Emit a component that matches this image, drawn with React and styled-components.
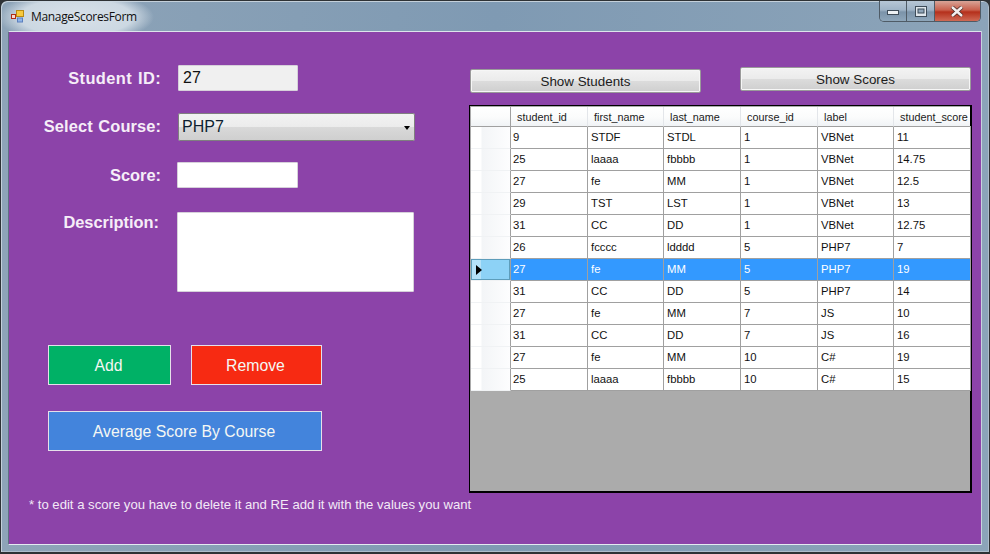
import React from "react";
import styled, { createGlobalStyle } from "styled-components";

const Global = createGlobalStyle`
  html, body { margin: 0; padding: 0; background: #2f3336; }
  body { width: 990px; height: 554px; overflow: hidden; font-family: "Liberation Sans", Arial, sans-serif; }
`;

const Frame = styled.div`
  box-sizing: border-box; width: 990px; height: 554px; padding: 0 7px 7px;
  display: flex; flex-direction: column;
  border: 1px solid #2e3235; border-bottom-width: 2px; border-radius: 7px 7px 2px 2px;
  background: linear-gradient(90deg, #8ea4b8 0%, #7f9ab3 50%, #8ca4b9 100%);
  box-shadow: inset 1px 1px 0 #c4d0da, inset -1px -1px 0 #aebdcb;
`;
const TitleBar = styled.div`
  height: 30px; flex: none; display: flex; justify-content: space-between; align-items: flex-start;
  margin: 0 0 0 -7px; padding-left: 10px;
  background: radial-gradient(ellipse 78px 26px at 75px 16px, #d8e1e9 0%, #ccd8e2 72%, rgba(138,163,186,0) 100%);
`;
const TitleLeft = styled.div`
  display: flex; align-items: center; gap: 6px; height: 30px;
`;
const TitleText = styled.span`
  font: 12px "Open Sans", "Noto Sans", sans-serif; color: #101010; letter-spacing: -0.33px;
`;
const Caption = styled.div`
  display: flex; height: 21px; margin-right: 1px; width: 102px;
  border: 1px solid #4f5b66; border-top: none; border-radius: 0 0 5px 5px; overflow: hidden;
  box-sizing: border-box;
`;
const CapBtn = styled.div`
  flex: ${p => p.$grow}; display: flex; align-items: center; justify-content: center;
  border-left: ${p => (p.$first ? "none" : "1px solid #4f5b66")};
  background: ${p => p.$close
    ? "linear-gradient(180deg, #d8a497 0%, #c9604d 45%, #b5301c 55%, #cf6a55 100%)"
    : "linear-gradient(180deg, #b6c6d5 0%, #9fb3c6 45%, #7b93a9 55%, #8ea6ba 100%)"};
`;
const Client = styled.div`
  flex: 1; display: flex; background: #8c43a9; border: 1px solid; border-color: #dde5ec #c7d3dd #e4ebf1 #5f7183;
  border-radius: 1px; min-height: 0;
`;
const LeftPane = styled.div`
  width: 460px; flex: none; display: flex; flex-direction: column; box-sizing: border-box; padding: 33px 0 0 1px;
`;
const FormRow = styled.div`
  display: flex; align-items: ${p => (p.$top ? "flex-start" : "center")}; height: ${p => p.$h}px;
  margin-bottom: ${p => p.$mb}px;
`;
const Label = styled.label`
  width: ${p => p.$w || 151}px; flex: none; text-align: right; font-weight: 700; font-size: 16.4px; word-spacing: 1px; color: #f6eef8;
  letter-spacing: ${p => p.$ls || 0}px;
  margin-right: ${p => p.$mr}px; padding-top: ${p => p.$pt || 0}px; padding-bottom: ${p => p.$pb || 0}px;
`;
const Field = styled.div`
  box-sizing: border-box; width: ${p => p.$w}px; height: ${p => p.$h}px; padding: 0 4px;
  display: flex; align-items: center; font-size: 16px; color: #111;
  background: ${p => p.$bg}; border: 1px solid #d6d0da; border-radius: 1px;
`;
const Combo = styled.div`
  box-sizing: border-box; width: 237px; height: 28px; display: flex; align-items: center; justify-content: space-between;
  padding: 0 4px 0 3px; font-size: 16px; color: #0e1f30; border: 1px solid #f4f4f4; outline: 1px solid #7f7f7f; outline-offset: -1px;
  border-radius: 2px;
  background: linear-gradient(180deg, #f2f2f2 0%, #ececec 48%, #d9d9d9 50%, #cfcfcf 100%);
`;
const Arrow = styled.i`
  width: 0; height: 0; margin-top: 2px; border-style: solid; border-width: 4px 3.5px 0; border-color: #000 transparent transparent;
`;
const ActionRow = styled.div`
  display: flex; gap: 20px; padding-left: 38px; margin-top: 53px;
`;
const Action = styled.button`
  box-sizing: border-box; width: ${p => p.$w}px; height: 40px; border: 1px solid #e6e0ea; border-radius: 0; padding: 1px 2px 0 0;
  background: ${p => p.$bg}; color: #f4f7f4; font: 15.8px "Liberation Sans", Arial, sans-serif;
`;
const AverageRow = styled.div`
  padding-left: 38px; margin-top: 26px;
`;
const Note = styled.p`
  margin: 46px 0 0 19px; font-size: 13.14px; color: #f3e9f6; white-space: nowrap; line-height: 16px;
`;
const RightPane = styled.div`
  flex: 1; display: flex; flex-direction: column; min-width: 0;
`;
const ShowRow = styled.div`
  display: flex; justify-content: space-between; align-items: flex-start; padding: 35px 10px 0 1px; height: 38px;
`;
const ShowBtn = styled.button`
  box-sizing: border-box; width: 231px; height: 24px; margin-top: ${p => p.$mt}px; padding: 0;
  border: 1px solid #9a9a9a; border-radius: 2px; box-shadow: inset 0 0 0 1px #f6f6f6;
  background: linear-gradient(180deg, #f3f3f3 0%, #ebebeb 48%, #dcdcdc 50%, #cfcfcf 100%);
  font: 13.4px "Liberation Sans", Arial, sans-serif; color: #1c1c1c;
`;
const GridView = styled.div`
  box-sizing: border-box; width: 503px; height: 388px; border: 2px solid #000; border-width: 1px 2px 2px 1px;
  background: #ababab; padding: 1px 0 0 1px;
`;
const Row = styled.div`
  display: flex; height: ${p => (p.$head ? 20 : 22)}px;
  background: ${p => (p.$head ? "linear-gradient(180deg,#fff 0%,#fbfcfc 50%,#eff2f5 100%)" : "#fff")};
`;
const RowHead = styled.div`
  box-sizing: border-box; width: 40px; flex: none; display: flex; align-items: center; padding-left: 5px;
  border-right: 1px solid #a0a0a0; border-bottom: ${p => (p.$head ? "1px solid #a0a0a0" : "1px solid #f0f2f4")};
  background: ${p => (p.$sel
    ? "linear-gradient(90deg,#b5e2f9 0 10px,#8dd2f6 10px 100%)"
    : p.$head ? "transparent" : "linear-gradient(90deg,#fff 0 10px,#f3f5f7 11px,#fdfdfe 100%)")};
  box-shadow: ${p => (p.$sel ? "inset 0 0 0 1px #5d9dbb" : "none")};
`;
const RowMark = styled.i`
  width: 0; height: 0; border-style: solid; border-width: 5px 0 5px 6px; border-color: transparent transparent transparent #000;
`;
const Cell = styled.div`
  box-sizing: border-box; width: ${p => p.$w}px; flex: none; font-size: 11.3px; line-height: 21px; padding-left: 3px;
  white-space: nowrap; overflow: hidden;
  color: ${p => (p.$sel ? "#fff" : "#111")};
  background: ${p => (p.$sel ? "#3399ff" : "transparent")};
  border-right: 1px solid #a0a0a0; border-bottom: 1px solid #a0a0a0;
  &:nth-child(2) { padding-left: 2px; }
`;
const HeadCell = styled.div`
  box-sizing: border-box; width: ${p => p.$w}px; flex: none; font-size: 10.8px; line-height: 19px; padding: 1px 0 0 6px;
  white-space: nowrap; overflow: hidden; color: #1a1a1a; border-right: 1px solid #e3e6ea; border-bottom: 1px solid #a0a0a0;
  &:last-child { border-right: none; }
`;

const widths = [77, 76, 77, 77, 76, 77];
const columns = ["student_id", "first_name", "last_name", "course_id", "label", "student_score"];
const rows = [
  ["9", "STDF", "STDL", "1", "VBNet", "11"],
  ["25", "laaaa", "fbbbb", "1", "VBNet", "14.75"],
  ["27", "fe", "MM", "1", "VBNet", "12.5"],
  ["29", "TST", "LST", "1", "VBNet", "13"],
  ["31", "CC", "DD", "1", "VBNet", "12.75"],
  ["26", "fcccc", "ldddd", "5", "PHP7", "7"],
  ["27", "fe", "MM", "5", "PHP7", "19"],
  ["31", "CC", "DD", "5", "PHP7", "14"],
  ["27", "fe", "MM", "7", "JS", "10"],
  ["31", "CC", "DD", "7", "JS", "16"],
  ["27", "fe", "MM", "10", "C#", "19"],
  ["25", "laaaa", "fbbbb", "10", "C#", "15"],
];

const FormIcon = () => (
  <svg width="14" height="14" viewBox="0 0 14 14">
    <rect x="0.5" y="5.5" width="4" height="4" fill="#f6d9d0" stroke="#b02a14" />
    <rect x="5.5" y="1.5" width="7" height="6" fill="#f7c93e" stroke="#b98a12" />
    <rect x="6.5" y="9" width="5" height="4" fill="#8fb4e8" stroke="#5a7fbd" />
  </svg>
);
const MinIcon = () => (
  <svg width="12" height="7" viewBox="0 0 12 7"><rect x="0.5" y="2.5" width="11" height="4" fill="#eef2f5" stroke="#3e4c59" /></svg>
);
const MaxIcon = () => (
  <svg width="12" height="11" viewBox="0 0 12 11"><rect x="0.5" y="0.5" width="11" height="10" fill="#dfe6ec" stroke="#3e4c59" /><rect x="3" y="3" width="6" height="4" fill="#8fa5b9" stroke="#3e4c59" strokeWidth="1" /></svg>
);
const CloseIcon = () => (
  <svg width="14" height="11" viewBox="0 0 14 11"><path d="M2 1 L12 10 M12 1 L2 10" stroke="#4a2a26" strokeWidth="4" /><path d="M2 1 L12 10 M12 1 L2 10" stroke="#f4efee" strokeWidth="2.4" /></svg>
);

export default function App() {
  return (
    <>
      <Global />
      <Frame>
        <TitleBar>
          <TitleLeft>
            <FormIcon />
            <TitleText>ManageScoresForm</TitleText>
          </TitleLeft>
          <Caption>
            <CapBtn $grow="27" $first><MinIcon /></CapBtn>
            <CapBtn $grow="27"><MaxIcon /></CapBtn>
            <CapBtn $grow="46" $close><CloseIcon /></CapBtn>
          </Caption>
        </TitleBar>
        <Client>
          <LeftPane>
            <FormRow $h={26} $mb={22}>
              <Label $mr={17} $ls={0.4}>Student ID:</Label>
              <Field $w={120} $h={26} $bg="#f0f0f0">27</Field>
            </FormRow>
            <FormRow $h={28} $mb={21}>
              <Label $mr={17} $ls={0.1} $pb={2}>Select Course:</Label>
              <Combo>PHP7<Arrow /></Combo>
            </FormRow>
            <FormRow $h={26} $mb={24}>
              <Label $mr={16}>Score:</Label>
              <Field $w={121} $h={26} $bg="#fff" />
            </FormRow>
            <FormRow $h={80} $top $mb={0}>
              <Label $w={149} $mr={18} $pt={1}>Description:</Label>
              <Field $w={237} $h={80} $bg="#fff" />
            </FormRow>
            <ActionRow>
              <Action $w={123} $bg="#00b166">Add</Action>
              <Action $w={131} $bg="#f72a12">Remove</Action>
            </ActionRow>
            <AverageRow>
              <Action $w={274} $bg="#4384dc">Average Score By Course</Action>
            </AverageRow>
            <Note>* to edit a score you have to delete it and RE add it with the values you want</Note>
          </LeftPane>
          <RightPane>
            <ShowRow>
              <ShowBtn $mt={2}>Show Students</ShowBtn>
              <ShowBtn $mt={0}>Show Scores</ShowBtn>
            </ShowRow>
            <GridView>
              <Row $head>
                <RowHead $head />
                {columns.map((c, i) => <HeadCell key={c} $w={widths[i]}>{c}</HeadCell>)}
              </Row>
              {rows.map((r, ri) => (
                <Row key={ri}>
                  <RowHead $sel={ri === 6}>{ri === 6 && <RowMark />}</RowHead>
                  {r.map((v, i) => <Cell key={i} $w={widths[i]} $sel={ri === 6}>{v}</Cell>)}
                </Row>
              ))}
            </GridView>
          </RightPane>
        </Client>
      </Frame>
    </>
  );
}
